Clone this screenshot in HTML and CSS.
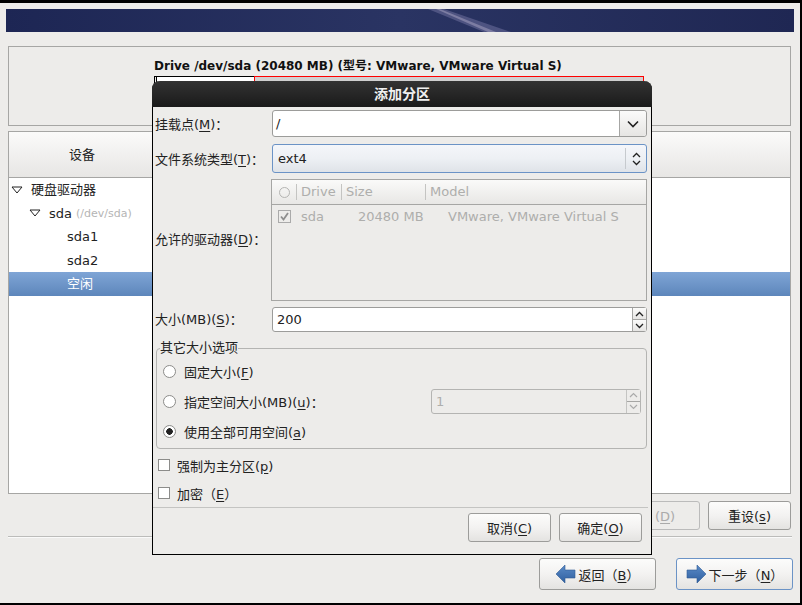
FILE: index.html
```html
<!DOCTYPE html>
<html lang="en">
<head>
  <meta charset="UTF-8">
  <title>添加分区</title>
  <link rel="stylesheet" href="styles.css">
</head>
<body>
  <div class="window">
    <div class="banner">
      <svg width="788" height="23" viewBox="0 0 788 23">
        <defs>
          <linearGradient id="bandBg" x1="0" x2="1" y1="0" y2="0">
            <stop offset="0" stop-color="#1d2654"/>
            <stop offset="0.5" stop-color="#2a3463"/>
            <stop offset="1" stop-color="#1f2753"/>
          </linearGradient>
        </defs>
        <rect width="788" height="23" fill="url(#bandBg)"/>
        <polygon points="422,0 438,0 505,23 478,23" fill="#6d6f9c" opacity="0.55"/>
        <polygon points="430,0 434,0 490,23 482,23" fill="#a9a6c4" opacity="0.5"/>
      </svg>
    </div>

    <div class="drive-box">
      <div class="drive-title">Drive /dev/sda (20480 MB) (型号: VMware, VMware Virtual S)</div>
      <div class="drive-bar">
        <div class="seg-tiny"></div>
        <div class="seg-free"></div>
        <div class="seg-used"></div>
      </div>
    </div>

    <div class="device-panel">
      <div class="device-head"><span class="head-cell">设备</span></div>
      <div class="tree-row row-disk"><svg class="twist" width="12" height="8" viewBox="0 0 12 8"><path d="M1 1h10L6 7z" fill="#fff" stroke="#222"/></svg><span>硬盘驱动器</span></div>
      <div class="tree-row row-sda"><svg class="twist" width="12" height="8" viewBox="0 0 12 8"><path d="M1 1h10L6 7z" fill="#fff" stroke="#222"/></svg><span>sda</span><span class="dev-path">(/dev/sda)</span></div>
      <div class="tree-row row-part">sda1</div>
      <div class="tree-row row-part">sda2</div>
      <div class="tree-row row-part selected">空闲</div>
    </div>

    <div class="panel-actions">
      <button class="btn btn-off"><span>删除 (<u>D</u>)</span></button>
      <button class="btn btn-reset"><span>重设(<u>s</u>)</span></button>
    </div>
    <div class="rule"></div>
    <div class="nav-actions">
      <button class="btn btn-nav">
        <svg width="20" height="20" viewBox="0 0 20 20">
          <defs>
            <linearGradient id="arrowFill" x1="0" x2="0" y1="0" y2="1">
              <stop offset="0" stop-color="#5a8bc8"/>
              <stop offset="1" stop-color="#2f5f9f"/>
            </linearGradient>
          </defs>
          <path d="M0 10 9 1v5h10v8H9v5z" fill="url(#arrowFill)" stroke="#2f5a94" stroke-width="0.6"/>
        </svg>
        <span>返回（<u>B</u>）</span>
      </button>
      <button class="btn btn-nav btn-focus">
        <svg width="20" height="20" viewBox="0 0 20 20"><path d="M20 10 11 1v5H1v8h10v5z" fill="url(#arrowFill)" stroke="#2f5a94" stroke-width="0.6"/></svg>
        <span>下一步（<u>N</u>）</span>
      </button>
    </div>
  </div>

  <div class="dialog">
    <div class="dialog-title">添加分区</div>
    <div class="dialog-body">
      <div class="form-row row-mount">
        <label>挂载点(<u>M</u>)：</label>
        <div class="combo">
          <div class="combo-text">/</div>
          <div class="combo-arrow">
            <svg width="12" height="8" viewBox="0 0 12 8"><path d="M1 1.500 6 6.500 11 1.500" fill="none" stroke="#222" stroke-width="1.600"/></svg>
          </div>
        </div>
      </div>
      <div class="form-row row-fs">
        <label>文件系统类型(<u>T</u>)：</label>
        <div class="select-focus">
          <span>ext4</span>
          <div class="select-arrows">
            <svg width="9" height="14" viewBox="0 0 9 14"><path d="M1 5 4.500 1.500 8 5M1 9l3.500 3.500L8 9" fill="none" stroke="#222" stroke-width="1.300"/></svg>
          </div>
        </div>
      </div>
      <div class="form-row row-drives">
        <label>允许的驱动器(<u>D</u>)：</label>
        <div class="drive-list">
          <div class="list-head">
            <span class="col col-check"><span class="radio-off"></span></span>
            <span class="col col-drive">Drive</span>
            <span class="col col-size">Size</span>
            <span class="col col-model">Model</span>
          </div>
          <div class="list-row">
            <span class="list-check">
              <svg width="13" height="13" viewBox="0 0 13 13"><rect x="0.500" y="0.500" width="12" height="12" fill="#edecea" stroke="#aaa"/><path d="M3 6.500 5.500 9.500 10 3" fill="none" stroke="#8e8e8e" stroke-width="1.800"/></svg>
            </span>
            <span class="cell-drive">sda</span>
            <span class="cell-size">20480 MB</span>
            <span class="cell-model">VMware, VMware Virtual S</span>
          </div>
        </div>
      </div>
      <div class="form-row row-size">
        <label>大小(MB)(<u>S</u>)：</label>
        <div class="spin">
          <div class="spin-text">200</div>
          <div class="spin-btns">
            <div class="spin-btn"><svg width="9" height="6" viewBox="0 0 9 6"><path d="M1 5 4.500 1.500 8 5" fill="none" stroke="#222" stroke-width="1.300"/></svg></div>
            <div class="spin-btn"><svg width="9" height="6" viewBox="0 0 9 6"><path d="M1 1 4.500 4.500 8 1" fill="none" stroke="#222" stroke-width="1.300"/></svg></div>
          </div>
        </div>
      </div>

      <fieldset class="size-options">
        <legend>其它大小选项</legend>
        <div class="option"><span class="radio"></span><span>固定大小(<u>F</u>)</span></div>
        <div class="option">
          <span class="radio"></span><span>指定空间大小(MB)(<u>u</u>)：</span>
          <div class="spin spin-off">
            <div class="spin-text">1</div>
            <div class="spin-btns">
              <div class="spin-btn"><svg width="9" height="6" viewBox="0 0 9 6"><path d="M1 5 4.500 1.500 8 5" fill="none" stroke="#aaa" stroke-width="1.200"/></svg></div>
              <div class="spin-btn"><svg width="9" height="6" viewBox="0 0 9 6"><path d="M1 1 4.500 4.500 8 1" fill="none" stroke="#aaa" stroke-width="1.200"/></svg></div>
            </div>
          </div>
        </div>
        <div class="option"><span class="radio radio-on"></span><span>使用全部可用空间(<u>a</u>)</span></div>
      </fieldset>

      <div class="check-row check-first"><span class="check"></span><span>强制为主分区(<u>p</u>)</span></div>
      <div class="check-row"><span class="check"></span><span>加密（<u>E</u>）</span></div>
    </div>
    <div class="dialog-actions">
      <button class="btn btn-dlg"><span>取消(<u>C</u>)</span></button>
      <button class="btn btn-dlg"><span>确定(<u>O</u>)</span></button>
    </div>
  </div>
</body>
</html>
```

FILE: styles.css
```css
html, body {
  margin: 0;
  padding: 0;
  background: #000;
}
body {
  width: 802px;
  height: 605px;
  overflow: hidden;
  position: relative;
  font-family: "DejaVu Sans", "Noto Sans CJK SC", sans-serif;
  font-size: 13px;
  color: #222;
}
u {
  text-underline-offset: 2px;
}
.window {
  width: 800px;
  height: 600px;
  margin-top: 3px;
  background: #edecea;
  box-sizing: border-box;
  padding: 6px 0 0 6px;
}
.banner {
  width: 788px;
  height: 23px;
}
.banner svg {
  display: block;
}
.drive-box {
  width: 783px;
  height: 80px;
  margin: 14px 0 0 2px;
  box-sizing: border-box;
  border: 1px solid #a6a6a4;
  padding: 12px 0 0 145px;
}
.drive-title {
  font-weight: bold;
  font-size: 12px;
  line-height: 15px;
  white-space: nowrap;
  color: #111;
}
.drive-bar {
  display: flex;
  width: 490px;
  height: 30px;
  margin-top: 2px;
}
.seg-tiny {
  width: 1px;
  border: 1px solid #000;
}
.seg-free {
  width: 97px;
  background: #fff;
  border-top: 1px solid #000;
}
.seg-used {
  flex: 1;
  background: #d0d0d0;
  border: 1px solid #f00;
}
.device-panel {
  width: 783px;
  height: 363px;
  margin: 5px 0 0 2px;
  box-sizing: border-box;
  border: 1px solid #a6a6a4;
  background: #fff;
}
.device-head {
  height: 45px;
  background: linear-gradient(#fbfbfa, #f1f0ef 50%, #e7e6e4);
  border-bottom: 1px solid #a6a6a4;
  display: flex;
  align-items: center;
}
.head-cell {
  margin-left: 60px;
  margin-bottom: 2px;
}
.tree-row {
  height: 23.500px;
  line-height: 23.500px;
  display: flex;
  align-items: center;
  white-space: pre;
}
.twist {
  margin-right: 8px;
}
.row-disk {
  padding-left: 2px;
}
.row-sda {
  padding-left: 20px;
}
.row-part {
  padding-left: 58px;
}
.dev-path {
  color: #b5b5b5;
  font-size: 11px;
  margin-left: 4px;
}
.selected {
  color: #fff;
  background: linear-gradient(#7fa5d6, #5d86bb);
}
.panel-actions {
  display: flex;
  justify-content: flex-end;
  gap: 8px;
  width: 785px;
  margin-top: 7px;
}
.btn {
  font-family: inherit;
  font-size: 13px;
  color: #222;
  padding: 0;
  border: 1px solid #9c9c9a;
  border-radius: 3px;
  background: linear-gradient(#fcfcfb, #f3f2f1 50%, #e4e3e1);
  display: flex;
  align-items: center;
  justify-content: center;
  white-space: pre;
}
.btn-reset {
  width: 83px;
  height: 29px;
}
.btn-off {
  width: 100px;
  height: 29px;
  color: #aaa;
  background: #edecea;
  border-color: #bbb;
}
.rule {
  width: 784px;
  margin: 6px 0 0 2px;
  border-top: 1px solid #bcbcba;
  border-bottom: 1px solid #fafafa;
}
.nav-actions {
  display: flex;
  justify-content: flex-end;
  gap: 20px;
  width: 787px;
  margin-top: 20px;
}
.btn-nav {
  width: 117px;
  height: 32px;
  gap: 3px;
}
.btn-focus {
  border-color: #6b93c6;
}
.dialog {
  position: absolute;
  left: 152px;
  top: 81px;
  width: 500px;
  height: 474px;
  box-sizing: border-box;
  background: #edecea;
  border: 1px solid #000;
  border-top: 0;
  border-radius: 8px 8px 0 0;
}
.dialog-title {
  height: 26px;
  margin: 0 -1px;
  line-height: 26px;
  text-align: center;
  font-weight: bold;
  font-size: 14px;
  color: #f0f0f0;
  background: linear-gradient(#333, #1a1a1a);
  border-radius: 8px 8px 0 0;
}
.dialog-body {
  padding: 3px 4px 0 2px;
}
.form-row {
  display: flex;
  align-items: center;
  white-space: nowrap;
}
.form-row label {
  width: 117px;
  flex: none;
}
.row-mount {
  height: 27px;
}
.row-mount label {
  padding-bottom: 1px;
}
.row-fs {
  height: 29px;
  margin-top: 7px;
}
.row-drives {
  height: 122px;
  margin-top: 6px;
}
.row-drives label {
  width: 116px;
  padding-bottom: 4px;
}
.row-size {
  height: 25px;
  margin-top: 6px;
}
.row-size label {
  padding-bottom: 2px;
}
.combo {
  flex: 1;
  height: 27px;
  box-sizing: border-box;
  display: flex;
  border: 1px solid #9c9c9a;
  border-radius: 3px;
  background: #fff;
}
.combo-text {
  flex: 1;
  padding-left: 3px;
  line-height: 25px;
}
.combo-arrow {
  width: 26px;
  display: flex;
  align-items: center;
  justify-content: center;
  border-left: 1px solid #a6a6a4;
  background: linear-gradient(#fbfbfa, #e6e5e3);
  border-radius: 0 3px 3px 0;
}
.select-focus {
  flex: 1;
  height: 29px;
  box-sizing: border-box;
  display: flex;
  align-items: center;
  justify-content: space-between;
  padding-left: 5px;
  border: 1px solid #6b93c6;
  border-radius: 3px;
  background: linear-gradient(#f4f6fa, #edf0f4 50%, #dfe3e8);
}
.select-arrows {
  width: 20px;
  height: 21px;
  display: flex;
  align-items: center;
  justify-content: center;
  border-left: 1px solid #c6cace;
}
.drive-list {
  width: 377px;
  height: 122px;
  box-sizing: border-box;
  border: 1px solid #a6a6a4;
  color: #aeaeac;
}
.list-head {
  height: 24px;
  display: flex;
  align-items: center;
  background: linear-gradient(#fafaf9, #e8e7e5);
  border-bottom: 1px solid #a6a6a4;
}
.col {
  height: 16px;
  line-height: 16px;
  box-sizing: border-box;
  border-left: 1px solid #c4c4c2;
  padding-left: 4px;
}
.col-check {
  width: 24px;
  border-left: 0;
  padding-left: 7px;
  display: flex;
  align-items: center;
}
.col-drive {
  width: 45px;
}
.col-size {
  width: 84px;
}
.radio-off {
  display: block;
  width: 9px;
  height: 9px;
  border: 1px solid #b4b4b2;
  border-radius: 50%;
}
.list-row {
  height: 22px;
  display: flex;
  align-items: center;
}
.list-check {
  width: 29px;
  padding-left: 6px;
  box-sizing: border-box;
  display: flex;
}
.cell-drive {
  width: 57px;
}
.cell-size {
  width: 90px;
}
.spin {
  flex: 1;
  height: 25px;
  box-sizing: border-box;
  display: flex;
  border: 1px solid #9c9c9a;
  border-radius: 3px;
  background: #fff;
}
.spin-text {
  flex: 1;
  padding-left: 4px;
  line-height: 23px;
}
.spin-btns {
  width: 13px;
  border-left: 1px solid #a6a6a4;
  display: flex;
  flex-direction: column;
}
.spin-btn {
  flex: 1;
  display: flex;
  align-items: center;
  justify-content: center;
  background: linear-gradient(#fbfbfa, #e6e5e3);
}
.spin-btn + .spin-btn {
  border-top: 1px solid #a6a6a4;
}
.spin-off {
  flex: none;
  width: 210px;
  margin-left: auto;
  margin-right: 5px;
  color: #aeaeac;
  background: #edecea;
  border-color: #b4b4b2;
}
.spin-off .spin-btn {
  background: #edecea;
}
.spin-off .spin-btns {
  border-color: #c4c4c2;
}
.size-options {
  margin: 9px 0 0 1px;
  width: 491px;
  height: 108px;
  box-sizing: border-box;
  padding: 0 0 0 6px;
  border: 1px solid #b4b4b2;
  border-radius: 4px;
}
.size-options legend {
  padding: 0;
  margin-left: -3px;
  line-height: 14px;
  background: #edecea;
}
.option {
  height: 30px;
  display: flex;
  align-items: center;
  white-space: pre;
}
.option:first-of-type {
  margin-top: 1px;
}
.radio {
  width: 11px;
  height: 11px;
  margin-right: 8px;
  border: 1px solid #8c8c8a;
  border-radius: 50%;
  background: #fff;
  display: inline-block;
  flex: none;
}
.radio-on {
  background: radial-gradient(circle, #222 0 3px, #fff 3.500px);
}
.check-row {
  height: 28px;
  display: flex;
  align-items: center;
  white-space: pre;
  padding-left: 3px;
}
.check-first {
  margin-top: 2px;
}
.check {
  width: 10px;
  height: 10px;
  margin-right: 7px;
  border: 1px solid #8c8c8a;
  background: #fff;
  flex: none;
}
.dialog-actions {
  display: flex;
  justify-content: flex-end;
  gap: 8px;
  margin: 0 3px 0 0;
  padding: 5px 6px 0 0;
  border-top: 1px solid #c4c4c2;
}
.btn-dlg {
  width: 83px;
  height: 29px;
}
```
